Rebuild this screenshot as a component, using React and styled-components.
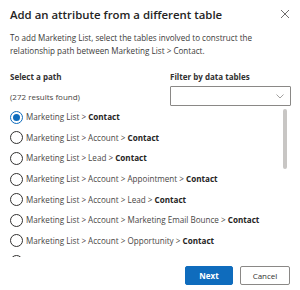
import React from "react";
import styled, { createGlobalStyle } from "styled-components";

const Global = createGlobalStyle`
  html, body { margin: 0; padding: 0; background: #fff; }
  body { font-family: "Open Sans", "Noto Sans", Arial, sans-serif; color: #323130; }
  * { box-sizing: border-box; }
`;

const Dialog = styled.div`
  width: 300px;
  height: 290px;
  padding: 3px 9px 0 10px;
  display: flex;
  flex-direction: column;
  overflow: hidden;
`;

const Header = styled.div`
  display: flex;
  align-items: center;
  justify-content: space-between;
  height: 22px;
`;

const Title = styled.h1`
  margin: 0;
  font-size: 11.4px;
  font-weight: 600;
  color: #252423;
  white-space: nowrap;
`;

const Close = styled.button`
  border: 0;
  background: none;
  padding: 0;
  width: 12px;
  height: 12px;
  display: flex;
  align-items: center;
  justify-content: center;
`;

const Description = styled.p`
  margin: 6px 0 0 0;
  font-size: 8.1px;
  line-height: 13px;
  color: #3b3a39;
`;

const Columns = styled.div`
  display: grid;
  grid-template-columns: 160px 121px;
  margin-top: 14px;
`;

const Column = styled.div`
  display: flex;
  flex-direction: column;
`;

const Label = styled.div`
  font-size: 8px;
  font-weight: 700;
  color: #323130;
  line-height: 12px;
`;

const Count = styled.div`
  font-size: 8px;
  color: #484644;
  margin-top: 8px;
  line-height: 12px;
`;

const Select = styled.div`
  margin-top: 3px;
  height: 20px;
  border: 1px solid #8a8886;
  border-radius: 1px;
  display: flex;
  align-items: center;
  justify-content: flex-end;
  padding-right: 6px;
`;

const ListWrap = styled.div`
  position: relative;
  margin-top: 1px;
  height: 150px;
  overflow: hidden;
`;

const Thumb = styled.div`
  position: absolute;
  right: 4px;
  top: 2px;
  width: 4px;
  height: 60px;
  background: #c8c6c4;
  border-radius: 2px;
`;

const Item = styled.label`
  display: flex;
  align-items: center;
  height: 20.6px;
  gap: 3px;
  font-size: 8.1px;
  color: #484644;
  white-space: nowrap;
`;

const ItemText = styled.span`
  line-height: 1;
`;

const Radio = styled.span`
  width: 13px;
  height: 13px;
  border-radius: 50%;
  border: 1px solid ${(p) => (p.$checked ? "#0f6cbd" : "#323130")};
  display: flex;
  align-items: center;
  justify-content: center;
  flex: none;
  &::after {
    content: "";
    width: 7px;
    height: 7px;
    border-radius: 50%;
    background: ${(p) => (p.$checked ? "#0f6cbd" : "transparent")};
  }
`;

const Strong = styled.b`
  font-weight: 700;
  color: #252423;
`;

const Footer = styled.div`
  display: flex;
  justify-content: flex-end;
  gap: 7px;
  margin-top: 9px;
  padding-right: 1px;
`;

const Button = styled.button`
  height: 19px;
  width: ${(p) => p.$w}px;
  border-radius: 2px;
  font-family: inherit;
  font-size: 8px;
  font-weight: ${(p) => (p.$primary ? 700 : 400)};
  border: 1px solid ${(p) => (p.$primary ? "#0f6cbd" : "#8a8886")};
  background: ${(p) => (p.$primary ? "#0f6cbd" : "#fff")};
  color: ${(p) => (p.$primary ? "#fff" : "#323130")};
  padding: 0;
`;

const paths = [
  ["Marketing List"],
  ["Marketing List", "Account"],
  ["Marketing List", "Lead"],
  ["Marketing List", "Account", "Appointment"],
  ["Marketing List", "Account", "Lead"],
  ["Marketing List", "Account", "Marketing Email Bounce"],
  ["Marketing List", "Account", "Opportunity"],
  ["Marketing List", "Account", "Phone Call"],
];

export default function App() {
  return (
    <>
      <Global />
      <Dialog>
        <Header>
          <Title>Add an attribute from a different table</Title>
          <Close aria-label="Close">
            <svg width="10" height="10" viewBox="0 0 10 10">
              <path d="M1 1L9 9M9 1L1 9" stroke="#605e5c" strokeWidth="0.9" />
            </svg>
          </Close>
        </Header>
        <Description>
          To add Marketing List, select the tables involved to construct the
          <br />
          relationship path between Marketing List &gt; Contact.
        </Description>
        <Columns>
          <Column>
            <Label>Select a path</Label>
            <Count>(272 results found)</Count>
          </Column>
          <Column>
            <Label>Filter by data tables</Label>
            <Select>
              <svg width="8" height="5" viewBox="0 0 8 5">
                <path d="M0.5 0.5L4 4L7.5 0.5" stroke="#8a8886" strokeWidth="0.8" fill="none" />
              </svg>
            </Select>
          </Column>
        </Columns>
        <ListWrap>
          {paths.map((p, i) => (
            <Item key={i}>
              <Radio $checked={i === 0} />
              <ItemText>
                {p.join(" > ")} &gt; <Strong>Contact</Strong>
              </ItemText>
            </Item>
          ))}
          <Thumb />
        </ListWrap>
        <Footer>
          <Button $primary $w={48}>Next</Button>
          <Button $w={50}>Cancel</Button>
        </Footer>
      </Dialog>
    </>
  );
}
